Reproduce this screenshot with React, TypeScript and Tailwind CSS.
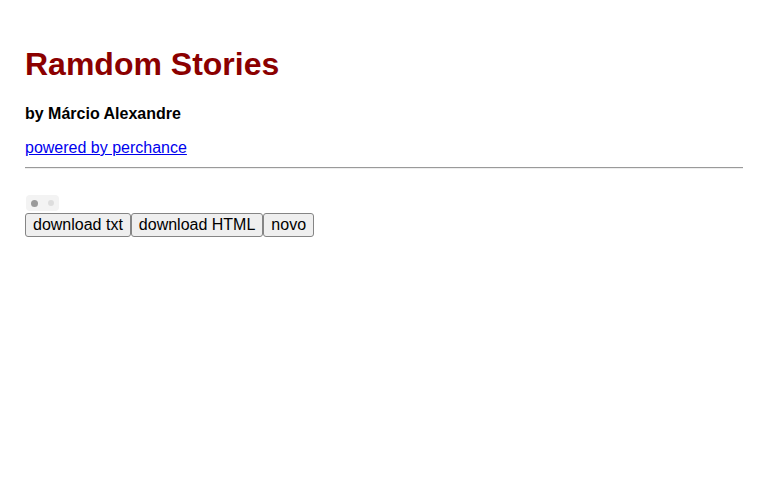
export default function App() {
  return (
    <div className="min-h-[480px] bg-white px-[25px] pt-[46px] font-['Liberation_Sans',Arial,sans-serif] text-black">
      <h1 className="text-[32px] leading-[37px] font-bold text-[#8b0000]">Ramdom Stories</h1>

      <p className="mt-[22px] text-base leading-[18px] font-bold">by Márcio Alexandre</p>

      <p className="mt-[16px] text-base leading-[18px]">
        <a href="#" className="text-[#0000ee] underline">
          powered by perchance
        </a>
      </p>

      <hr className="mt-[10px] border-t border-b border-t-[#9a9a9a] border-b-[#eeeeee]" />

      <div className="mt-[26px] ml-[1px] flex h-[16px] w-[33px] items-center justify-around rounded-sm bg-[#f3f3f3]">
        <span className="h-[7px] w-[7px] rounded-full bg-[#9a9a9a]" />
        <span className="h-[6px] w-[6px] rounded-full bg-[#dddddd]" />
      </div>

      <div className="mt-[2px] flex">
        <button className="rounded-[3px] border border-[#858585] bg-[#efefef] px-[7px] py-[2px] text-base leading-[18px]">
          download txt
        </button>
        <button className="rounded-[3px] border border-[#858585] bg-[#efefef] px-[7px] py-[2px] text-base leading-[18px]">
          download HTML
        </button>
        <button className="rounded-[3px] border border-[#858585] bg-[#efefef] px-[7px] py-[2px] text-base leading-[18px]">
          novo
        </button>
      </div>
    </div>
  )
}
